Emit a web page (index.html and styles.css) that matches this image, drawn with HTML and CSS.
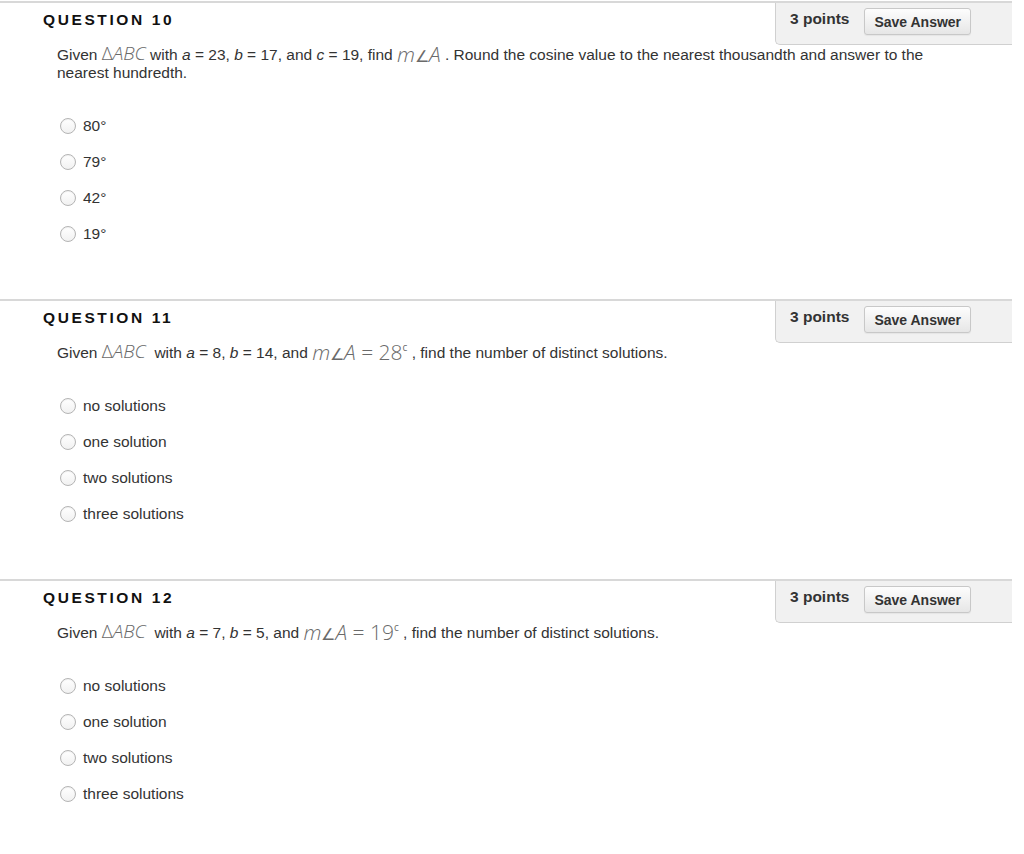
FILE: index.html
```html
<!DOCTYPE html>
<html>
<head>
<meta charset="utf-8">
<link rel="stylesheet" href="styles.css">
</head>
<body>
<div class="page">
  <section class="question">
    <div class="q-head">
      <h2 class="q-title">QUESTION 10</h2>
      <div class="points-box"><span class="points">3 points</span><button class="save-btn">Save Answer</button></div>
    </div>
    <p class="q-text">Given <span class="math tri">Δ<i>ABC</i></span> with <i>a</i> = 23, <i>b</i> = 17, and <i>c</i> = 19, find <span class="math big"><i>m</i><span class="ang">∠</span><i>A</i></span> . Round the cosine value to the nearest thousandth and answer to the nearest hundredth.</p>
    <ul class="options">
      <li><span class="radio"></span>80°</li>
      <li><span class="radio"></span>79°</li>
      <li><span class="radio"></span>42°</li>
      <li><span class="radio"></span>19°</li>
    </ul>
  </section>
  <section class="question">
    <div class="q-head">
      <h2 class="q-title">QUESTION 11</h2>
      <div class="points-box"><span class="points">3 points</span><button class="save-btn">Save Answer</button></div>
    </div>
    <p class="q-text">Given <span class="math tri">Δ<i>ABC</i></span>&nbsp; with <i>a</i> = 8, <i>b</i> = 14, and <span class="math big"><i>m</i><span class="ang">∠</span><i>A</i> = 28<sup>c</sup></span> , find the number of distinct solutions.</p>
    <ul class="options">
      <li><span class="radio"></span>no solutions</li>
      <li><span class="radio"></span>one solution</li>
      <li><span class="radio"></span>two solutions</li>
      <li><span class="radio"></span>three solutions</li>
    </ul>
  </section>
  <section class="question">
    <div class="q-head">
      <h2 class="q-title">QUESTION 12</h2>
      <div class="points-box"><span class="points">3 points</span><button class="save-btn">Save Answer</button></div>
    </div>
    <p class="q-text">Given <span class="math tri">Δ<i>ABC</i></span>&nbsp; with <i>a</i> = 7, <i>b</i> = 5, and <span class="math big"><i>m</i><span class="ang">∠</span><i>A</i> = 19<sup>c</sup></span> , find the number of distinct solutions.</p>
    <ul class="options">
      <li><span class="radio"></span>no solutions</li>
      <li><span class="radio"></span>one solution</li>
      <li><span class="radio"></span>two solutions</li>
      <li><span class="radio"></span>three solutions</li>
    </ul>
  </section>
</div>
</body>
</html>
```
FILE: styles.css
```css
html, body {
  margin: 0;
  padding: 0;
  background: #fff;
}
body {
  font-family: "Liberation Sans", Arial, sans-serif;
  color: #333;
  font-size: 15.5px;
}
.page {
  width: 1012px;
  padding-top: 1px;
}
.question {
  border-top: 2px solid #d8d8d8;
  padding-bottom: 47px;
}
.q-head {
  display: flex;
  align-items: flex-start;
  height: 43px;
}
.q-title {
  margin: 0;
  padding: 8px 0 0 43px;
  font-size: 15.5px;
  line-height: 18px;
  font-weight: bold;
  letter-spacing: 2.6px;
  color: #111;
}
.points-box {
  margin-left: auto;
  width: 237px;
  height: 42px;
  box-sizing: border-box;
  background: #f1f1f1;
  border-left: 1px solid #d0d0d0;
  border-bottom: 1px solid #d0d0d0;
  border-bottom-left-radius: 5px;
  display: flex;
  align-items: flex-start;
  padding: 5px 0 0 14px;
}
.points {
  font-weight: bold;
  font-size: 15.5px;
  line-height: 18px;
  padding-top: 2px;
  color: #333;
}
.save-btn {
  margin-left: 15px;
  height: 27px;
  padding: 0 9px;
  border: 1px solid #c8c8c8;
  border-radius: 3px;
  background: linear-gradient(#fdfdfd, #e6e6e6);
  font-family: "Liberation Sans", Arial, sans-serif;
  font-weight: bold;
  font-size: 14px;
  color: #333;
  box-shadow: 0 1px 1px rgba(0,0,0,0.05);
}
.q-text {
  margin: 0;
  padding-left: 57px;
  width: 900px;
  font-size: 15.5px;
  line-height: 18px;
  color: #333;
}
.math {
  font-family: "Open Sans", "DejaVu Sans", sans-serif;
  font-weight: 300;
  color: #6a6a6a;
  line-height: 0;
}
.math i {
  font-style: italic;
}
.tri {
  font-size: 19px;
}
.big {
  font-size: 21px;
  vertical-align: -2px;
}
.ang {
  font-size: 16px;
  font-weight: 300;
}
.big sup {
  font-size: 10px;
  vertical-align: 9px;
  font-weight: 400;
}
.options {
  list-style: none;
  margin: 26px 0 0 0;
  padding: 0 0 0 60px;
}
.options li {
  height: 36px;
  display: flex;
  align-items: center;
  gap: 7px;
  font-size: 15.5px;
  color: #333;
}
.radio {
  width: 16px;
  height: 16px;
  box-sizing: border-box;
  border-radius: 50%;
  border: 1px solid #b4b4b4;
  background: linear-gradient(#ffffff, #f1f1f1);
  box-shadow: inset 0 1px 1px rgba(0,0,0,0.06);
}
```
